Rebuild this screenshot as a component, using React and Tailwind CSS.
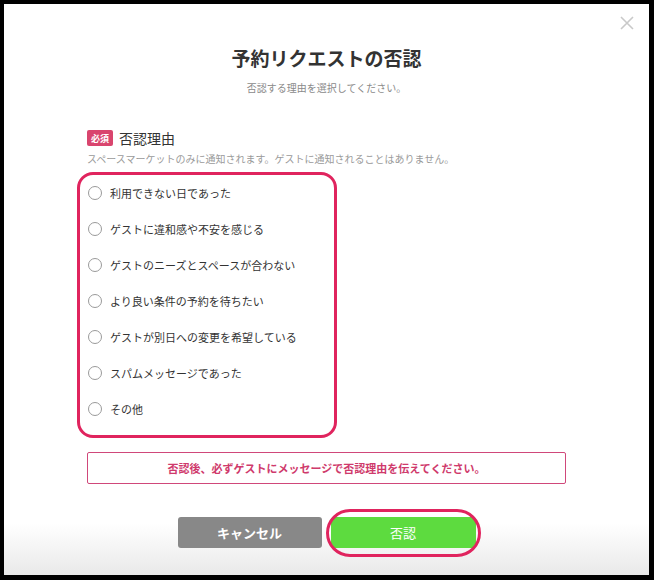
import React, { useState } from 'react';

const reasons = [
  '利用できない日であった',
  'ゲストに違和感や不安を感じる',
  'ゲストのニーズとスペースが合わない',
  'より良い条件の予約を待ちたい',
  'ゲストが別日への変更を希望している',
  'スパムメッセージであった',
  'その他',
];

const jp = { fontFamily: '"Noto Sans CJK JP", "Noto Sans", sans-serif' };

function Radio({ label, checked, onSelect }) {
  return (
    <label className="flex h-[36px] cursor-pointer items-center gap-[8px]" onClick={onSelect}>
      <span className="flex h-[14px] w-[14px] items-center justify-center rounded-full border border-[#9a9a9a] bg-white">
        {checked && <span className="h-[6px] w-[6px] rounded-full bg-[#5ddb3f]" />}
      </span>
      <span className="text-[11px] leading-none text-[#333]">{label}</span>
    </label>
  );
}

export default function App() {
  const [selected, setSelected] = useState(null);

  return (
    <div className="flex h-[580px] w-[654px] bg-black pb-[5px] pl-[4px] pr-[5px] pt-[4px]" style={jp}>
      <div className="relative flex flex-1 flex-col bg-linear-to-b from-white from-[91%] to-[#e9e9e9] px-[83px]">
        {/* close */}
        <button className="absolute right-[14px] top-[11px] flex h-[16px] w-[16px] items-center justify-center">
          <svg width="14" height="14" viewBox="0 0 14 14" fill="none">
            <path d="M1 1L13 13M13 1L1 13" stroke="#c9c9c9" strokeWidth="1.6" />
          </svg>
        </button>

        <h1 className="mt-[40px] text-center text-[19px] font-bold leading-[28px] text-[#333]">
          予約リクエストの否認
        </h1>
        <p className="mt-[8px] text-center text-[10px] leading-[16px] text-[#8a8a8a]">
          否認する理由を選択してください。
        </p>

        <div className="mt-[34px] flex h-[16px] items-center gap-[6px]">
          <span className="flex h-[16px] w-[26px] items-center justify-center rounded-[2px] bg-[#d9456e] text-[9px] font-bold leading-none text-white">
            必須
          </span>
          <span className="text-[14px] leading-none text-[#333]">否認理由</span>
        </div>
        <p className="mt-[6px] text-[10px] leading-[14px] text-[#9a9a9a]">
          スペースマーケットのみに通知されます。ゲストに通知されることはありません。
        </p>

        <div className="-ml-[10px] mt-[6px] flex w-[260px] flex-col rounded-[16px] border-[3px] border-[#e0245e] pb-[8px] pl-[8px]">
          {reasons.map((r, i) => (
            <Radio key={r} label={r} checked={selected === i} onSelect={() => setSelected(i)} />
          ))}
        </div>

        <div className="mt-[14px] flex h-[32px] items-center justify-center rounded-[2px] border border-[#d0487a] text-[11px] font-bold text-[#cf3a6c]">
          否認後、必ずゲストにメッセージで否認理由を伝えてください。
        </div>

        <div className="mt-[33px] flex justify-center gap-[9px]">
          <button className="flex h-[31px] w-[144px] items-center justify-center rounded-[3px] bg-[#888888] text-[13px] font-bold text-white">
            キャンセル
          </button>
          <div className="relative">
            <button className="flex h-[31px] w-[145px] items-center justify-center rounded-[3px] bg-[#5ddb3f] text-[13px] text-white">
              否認
            </button>
            <span className="pointer-events-none absolute -bottom-[9px] -left-[5px] -right-[5px] -top-[8px] rounded-[24px] border-[3px] border-[#e0245e]" />
          </div>
        </div>
      </div>
    </div>
  );
}
